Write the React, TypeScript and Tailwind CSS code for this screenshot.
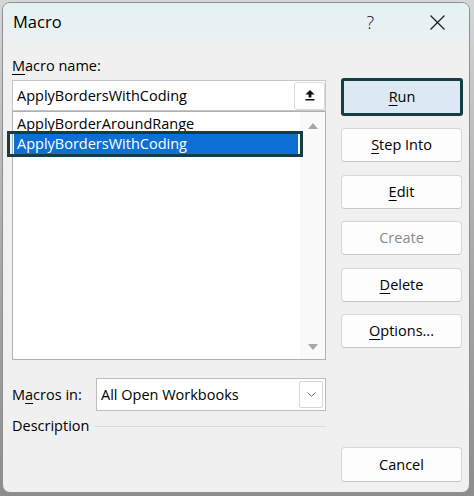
import React from "react";

function U({ children }: { children: React.ReactNode }) {
  return <span className="underline decoration-1 underline-offset-[3px]">{children}</span>;
}

function Btn({ children, className = "" }: { children: React.ReactNode; className?: string }) {
  return (
    <div
      className={`flex w-[121px] items-center justify-center rounded-[4px] border border-[#d6d6d6] border-b-[#c6c6c6] bg-[#fdfdfd] text-[14.5px] leading-[20px] ${className}`}
    >
      {children}
    </div>
  );
}

export default function App() {
  return (
    <div className="h-[496px] w-[474px] bg-gradient-to-b from-[#d4d6d7] via-[#aaaaaa] to-[#8d8d8d] pl-[2px] pt-[2px] font-['Open_Sans',sans-serif] text-black">
      <div className="flex h-[491px] w-[468px] flex-col overflow-hidden rounded-[8px] border border-[#8f8f8f] bg-[#f0f0f0]">
        {/* Title bar */}
        <div className="flex h-[42px] shrink-0 items-start bg-gradient-to-b from-[#e3f1f4] to-[#eef0f1] pl-[10px] pr-[24px] pt-[8px]">
          <div className="text-[16.5px] leading-[22px]">Macro</div>
          <div className="ml-auto mr-[56px] text-[18px] font-light leading-[22px] text-[#111]">?</div>
          <svg className="mt-[4px]" width="15" height="15" viewBox="0 0 15 15">
            <path d="M0.5 0.5 L14.5 14.5 M14.5 0.5 L0.5 14.5" stroke="#1a1a1a" strokeWidth="1.2" fill="none" />
          </svg>
        </div>

        {/* Body */}
        <div className="flex flex-1 pl-[9px] pr-[7px]">
          {/* Left column */}
          <div className="w-[314px] pt-[11px]">
            <div className="h-[20px] text-[14.5px] leading-[20px]">
              <U>M</U>acro name:
            </div>
            <div className="mt-[4px] flex h-[31px] items-center border border-[#c6c6c6] bg-white pl-[4px]">
              <span className="flex-1 text-[14.5px] leading-[20px]">ApplyBordersWithCoding</span>
              <div className="flex h-[28px] w-[31px] items-center justify-center rounded-[3px] border border-[#dadada] bg-white">
                <svg width="10" height="11" viewBox="0 0 10 11">
                  <polygon points="5,0 9.6,4.6 6.4,4.6 6.4,7.4 3.6,7.4 3.6,4.6 0.4,4.6" fill="#111" />
                  <rect x="0.5" y="9" width="9" height="1.5" fill="#111" />
                </svg>
              </div>
            </div>
            <div className="flex h-[249px] border border-[#b0b0b0] bg-white">
              <div className="flex-1 pt-[2px]">
                <div className="h-[20px] pl-[4px] text-[14.5px] leading-[20px]">ApplyBorderAroundRange</div>
                <div className="relative ml-[1px] mr-[2px] h-[20px] bg-[#0c6fd4] pl-[3px] text-[14.5px] leading-[20px] text-white">
                  ApplyBordersWithCoding
                  <div className="absolute -bottom-[3px] -left-[7px] -right-[5px] -top-[3px] border-[3px] border-[#143f42]" />
                </div>
              </div>
              <div className="flex w-[25px] flex-col items-center justify-between bg-[#f9f9f9] pb-[9px] pt-[11px]">
                <svg width="10" height="6" viewBox="0 0 10 6">
                  <polygon points="5,0 10,6 0,6" fill="#a6a6a6" />
                </svg>
                <svg width="10" height="6" viewBox="0 0 10 6">
                  <polygon points="0,0 10,0 5,6" fill="#a6a6a6" />
                </svg>
              </div>
            </div>

            <div className="mt-[18px] flex h-[33px] items-center">
              <div className="w-[84px] text-[14.5px] leading-[20px]">
                M<U>a</U>cros in:
              </div>
              <div className="flex h-[33px] flex-1 items-center border border-[#bdbdbd] bg-white pl-[4px] pr-[2px]">
                <span className="flex-1 text-[14.5px] leading-[20px]">All Open Workbooks</span>
                <div className="flex h-[27px] w-[24px] items-center justify-center rounded-[2px] border border-[#d8d8d8] bg-white">
                  <svg width="9" height="5" viewBox="0 0 9 5">
                    <path d="M0.5 0.5 L4.5 4.3 L8.5 0.5" stroke="#6a6a6a" strokeWidth="1" fill="none" />
                  </svg>
                </div>
              </div>
            </div>

            <div className="mt-[5px] flex h-[20px] items-center">
              <span className="text-[14.5px] leading-[20px]">Description</span>
              <div className="ml-[5px] h-px flex-1 bg-[#d9d9d9]" />
            </div>
          </div>

          {/* Right column */}
          <div className="ml-[15px] flex w-[121px] flex-col pb-[10px] pt-[33px]">
            <div className="flex h-[38px] w-[122px] items-center justify-center rounded-[3px] border-[3px] border-[#143f42] bg-[#dce9f5] text-[14.5px] leading-[20px]">
              <span>
                <U>R</U>un
              </span>
            </div>
            <div className="mt-[12px] flex flex-col gap-[12.5px]">
              <Btn className="h-[34px]">
                <span>
                  <U>S</U>tep Into
                </span>
              </Btn>
              <Btn className="h-[34px]">
                <span>
                  <U>E</U>dit
                </span>
              </Btn>
              <Btn className="h-[34px] text-[#8a8a8a]">Create</Btn>
              <Btn className="h-[34px]">
                <span>
                  <U>D</U>elete
                </span>
              </Btn>
              <Btn className="h-[34px]">
                <span>
                  <U>O</U>ptions...
                </span>
              </Btn>
            </div>
            <Btn className="mt-auto h-[35px]">Cancel</Btn>
          </div>
        </div>
      </div>
    </div>
  );
}
